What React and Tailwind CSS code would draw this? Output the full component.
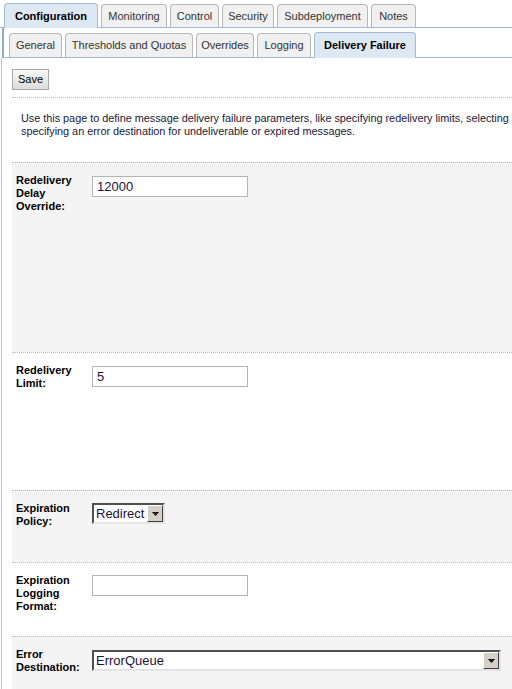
import React from 'react';

const topTabs = [
  { label: 'Configuration', w: 'w-[94px]', active: true },
  { label: 'Monitoring', w: 'w-[66px]' },
  { label: 'Control', w: 'w-[49px]' },
  { label: 'Security', w: 'w-[52px]' },
  { label: 'Subdeployment', w: 'w-[91px]' },
  { label: 'Notes', w: 'w-[45px]' },
];

const subTabs = [
  { label: 'General', w: 'w-[53px]' },
  { label: 'Thresholds and Quotas', w: 'w-[128px]' },
  { label: 'Overrides', w: 'w-[58px]' },
  { label: 'Logging', w: 'w-[54px]' },
  { label: 'Delivery Failure', w: 'w-[102px]', active: true },
];

const Tab = ({ label, w, active, tall }) => (
  <div
    className={
      active
        ? `${w} ${tall ? 'h-[26px]' : 'h-[25px]'} -mb-px flex items-center justify-center rounded-t-[4px] border border-b-0 border-[#a4bad0] bg-[#dde8f2] font-bold text-black`
        : `${w} ${tall ? 'h-[24px]' : 'h-[23px]'} flex items-center justify-center rounded-t-[4px] border border-b-0 border-[#b8b8b8] bg-[#f0f0f0] text-[#333]`
    }
  >
    {label}
  </div>
);

const TextField = ({ value }) => (
  <div className="flex h-[21px] w-[156px] items-center border border-[#b5b5b5] bg-white px-[4px] text-[13px] text-[#1c1040]">
    {value}
  </div>
);

// classic sunken combo box with a raised arrow button
const Combo = ({ value, w }) => (
  <div className={`${w} flex h-[21px] border-2 border-t-[#505050] border-l-[#505050] border-b-[#e4e4e4] border-r-[#e4e4e4] bg-white`}>
    <div className="flex flex-1 items-center pl-[2px] text-[13px] text-[#1c1040] whitespace-nowrap">{value}</div>
    <div className="flex w-[16px] items-center justify-center border border-t-white border-l-white border-b-[#404040] border-r-[#404040] bg-[#d4d0c8]">
      <svg width="7" height="4" viewBox="0 0 7 4">
        <path d="M0 0h7L3.5 4z" fill="#000" />
      </svg>
    </div>
  </div>
);

const Row = ({ label, gray, h, children }) => (
  <div className={`${h} flex border-t border-dotted border-[#b8b8b8] ${gray ? 'bg-[#f4f4f4]' : 'bg-white'}`}>
    <div className="w-[80px] shrink-0 pl-[4px] pr-[6px] pt-[11px] font-bold leading-[13px] text-black">
      {label}
    </div>
    <div className="w-[419px] shrink-0 pt-[13px]">{children}</div>
  </div>
);

export default function App() {
  return (
    <div
      className="h-[689px] w-[512px] overflow-hidden bg-white text-[11px]"
      style={{ fontFamily: '"Liberation Sans", Arial, sans-serif' }}
    >
      {/* main tabs */}
      <div className="flex h-[28px] items-end gap-[3px] border-b border-[#a4bad0] pl-[4px]">
        {topTabs.map((t) => (
          <Tab key={t.label} {...t} />
        ))}
      </div>

      {/* configuration sub tabs */}
      <div className="ml-[2px] flex h-[30px] items-end gap-[3px] border-b border-l-2 border-b-[#a4bad0] border-l-[#8fadc9] pl-[5px]">
        {subTabs.map((t) => (
          <Tab key={t.label} {...t} tall />
        ))}
      </div>

      <div className="ml-[1px] h-full border-l border-[#c4c4c4] pl-[10px]">
        <div className="pt-[11px]">
          <button className="flex h-[21px] w-[37px] items-center justify-center border border-[#a8a8a8] bg-gradient-to-b from-[#f8f8f8] to-[#dcdcdc] text-[11px] text-black">
            Save
          </button>
        </div>

        <div className="mt-[7px] w-[600px] border-t border-dotted border-[#b8b8b8] pb-[24px] pl-[9px] pt-[14px] text-[10.9px] leading-[13px] tracking-[-0.03px] text-[#1a1a3a] whitespace-nowrap">
          Use this page to define message delivery failure parameters, like specifying redelivery limits, selecting
          <br />
          specifying an error destination for undeliverable or expired messages.
        </div>

        <Row label="Redelivery Delay Override:" gray h="h-[190px]">
          <TextField value="12000" />
        </Row>
        <Row label="Redelivery Limit:" h="h-[138px]">
          <TextField value="5" />
        </Row>
        <Row label="Expiration Policy:" gray h="h-[72px]">
          <div className="-mt-[1px]">
            <Combo value="Redirect" w="w-[73px]" />
          </div>
        </Row>
        <Row label="Expiration Logging Format:" h="h-[74px]">
          <div className="-mt-[1px]">
            <TextField value="" />
          </div>
        </Row>
        <Row label="Error Destination:" gray h="h-[60px]">
          <Combo value="ErrorQueue" w="w-[409px]" />
        </Row>
      </div>
    </div>
  );
}
